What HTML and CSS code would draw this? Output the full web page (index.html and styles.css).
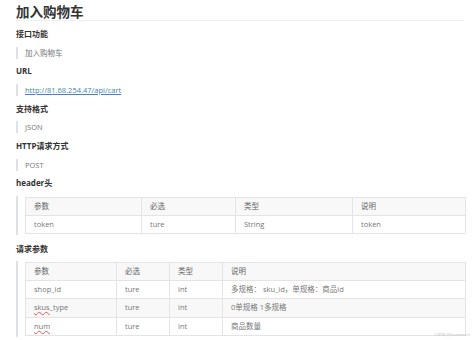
FILE: index.html
```html
<!DOCTYPE html>
<html lang="zh">
<head>
<meta charset="utf-8">
<title>加入购物车</title>
<link rel="stylesheet" href="styles.css">
</head>
<body>
<div class="page">
  <h1 class="title">加入购物车</h1>

  <h3 class="sec">接口功能</h3>
  <blockquote class="bq">加入购物车</blockquote>

  <h3 class="sec">URL</h3>
  <blockquote class="bq"><a class="link" href="#">http://81.68.254.47/api/cart</a></blockquote>

  <h3 class="sec">支持格式</h3>
  <blockquote class="bq">JSON</blockquote>

  <h3 class="sec">HTTP请求方式</h3>
  <blockquote class="bq">POST</blockquote>

  <h3 class="sec">header头</h3>
  <blockquote class="bq bq-table">
    <table class="tbl tbl-header">
      <colgroup><col class="c1"><col class="c2"><col class="c3"><col class="c4"></colgroup>
      <thead><tr><th>参数</th><th>必选</th><th>类型</th><th>说明</th></tr></thead>
      <tbody><tr><td>token</td><td>ture</td><td>String</td><td>token</td></tr></tbody>
    </table>
  </blockquote>

  <h3 class="sec sec-last">请求参数</h3>
  <blockquote class="bq bq-table">
    <table class="tbl tbl-params">
      <colgroup><col class="c1"><col class="c2"><col class="c3"><col class="c4"></colgroup>
      <thead><tr><th>参数</th><th>必选</th><th>类型</th><th>说明</th></tr></thead>
      <tbody>
        <tr><td>shop_id</td><td>ture</td><td>int</td><td>多规格： sku_id，单规格：商品id</td></tr>
        <tr><td><span class="spell">skus</span>_type</td><td>ture</td><td>int</td><td>0单规格 1多规格</td></tr>
        <tr><td><span class="spell">num</span></td><td>ture</td><td>int</td><td>商品数量</td></tr>
      </tbody>
    </table>
  </blockquote>
</div>
<div class="watermark">CSDN @Ycomment</div>
</body>
</html>
```
FILE: styles.css
```css
html, body {
  margin: 0;
  padding: 0;
  background: #fff;
}
body {
  font-family: "Open Sans", "Noto Sans CJK SC", sans-serif;
  color: #333;
  width: 474px;
  height: 340px;
  overflow: hidden;
  position: relative;
}
.page {
  padding: 4px 9px 0 16px;
}
.title {
  margin: 0 0 7px;
  font-size: 13.5px;
  line-height: 16px;
  font-weight: 700;
  color: #333;
  border-bottom: 1px solid #f0f0f0;
}
.sec {
  margin: 0 0 6.67px;
  font-size: 8px;
  line-height: 12px;
  font-weight: 700;
  color: #333;
}
.sec-last {
  margin-bottom: 6px;
}
.bq {
  margin: 0 0 6.67px;
  padding: 0 0 0 7px;
  border-left: 2px solid #dfe2e5;
  font-size: 7.5px;
  line-height: 12px;
  color: #777;
}
.bq-table {
  padding-top: 1px;
  padding-bottom: 1px;
  margin-bottom: 8px;
}
.link {
  color: #4183c4;
  text-decoration: underline;
}
.tbl {
  border-collapse: collapse;
  width: 440px;
  table-layout: fixed;
  font-size: 7.5px;
  color: #777;
}
.tbl th, .tbl td {
  border: 1px solid #e4e4e4;
  padding: 0 8px;
  height: 17px;
  line-height: 17px;
  text-align: left;
  font-weight: 400;
  white-space: nowrap;
}
.tbl th {
  color: #666;
  background: #f8f8f8;
}
.tbl tbody tr:nth-child(2n) {
  background: #f8f8f8;
}
.tbl-header .c1 { width: 116px; }
.tbl-header .c2 { width: 94px; }
.tbl-header .c3 { width: 117px; }
.tbl-header .c4 { width: 113px; }
.tbl-params .c1 { width: 91px; }
.tbl-params .c2 { width: 53px; }
.tbl-params .c3 { width: 53px; }
.tbl-params .c4 { width: 243px; }
.tbl-params th, .tbl-params td {
  height: 17.25px;
  line-height: 17.25px;
}
.spell {
  text-decoration: underline wavy #e25555;
  text-decoration-thickness: 0.7px;
  text-underline-offset: 1px;
}
.watermark {
  position: absolute;
  right: 4px;
  top: 332px;
  font-size: 4px;
  line-height: 5px;
  color: #bbb;
  font-family: "Open Sans", sans-serif;
}
```
